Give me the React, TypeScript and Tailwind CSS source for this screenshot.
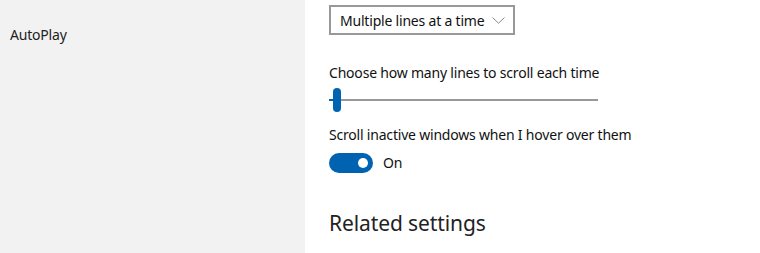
import { useState } from 'react';

const font = { fontFamily: '"Noto Sans", "Open Sans", sans-serif' };

function Dropdown() {
  return (
    <div className="flex h-[30px] w-[186px] items-center justify-between whitespace-nowrap border-2 border-[#999999] bg-white pl-[9px] pr-[8px] text-[14px] tracking-[-0.2px] text-[#111]">
      <span>Multiple lines at a time</span>
      <svg width="13" height="7" viewBox="0 0 13 7" className="mt-[1px]">
        <path d="M0.5 0.5 L6.5 6.2 L12.5 0.5" fill="none" stroke="#8a8a8a" strokeWidth="1" />
      </svg>
    </div>
  );
}

function Slider() {
  return (
    <div className="relative h-[24px] w-[269px]">
      <div className="absolute left-0 top-[11px] h-[2px] w-full bg-[#999999]" />
      <div className="absolute left-0 top-[11px] h-[2px] w-[6px] bg-[#0063b1]" />
      <div className="absolute left-[4px] top-0 h-[24px] w-[8px] rounded-full bg-[#0063b1]" />
    </div>
  );
}

function Toggle() {
  const [on, setOn] = useState(true);
  return (
    <button onClick={() => setOn(!on)} className="flex items-center gap-[10px]">
      <span className="flex h-[20px] w-[44px] items-center justify-end rounded-full bg-[#0063b1] pr-[5px]">
        <span className="h-[10px] w-[10px] rounded-full bg-white" />
      </span>
      <span className="text-[14px] tracking-[-0.2px] text-[#111]">{on ? 'On' : 'Off'}</span>
    </button>
  );
}

export default function App() {
  return (
    <div className="flex h-[253px] w-[760px] overflow-hidden bg-white" style={font}>
      <aside className="w-[305px] shrink-0 bg-[#f2f2f2] pl-[10px] pt-[24px]">
        <div className="text-[14px] tracking-[-0.2px] text-[#222]">AutoPlay</div>
      </aside>
      <main className="flex flex-col pl-[24px] pt-[5px]">
        <Dropdown />
        <div className="mt-[28px] text-[14px] leading-[20px] tracking-[-0.2px] text-[#111]">
          Choose how many lines to scroll each time
        </div>
        <div className="mt-[5px]">
          <Slider />
        </div>
        <div className="mt-[13px] text-[14px] leading-[20px] tracking-[-0.2px] text-[#111]">
          Scroll inactive windows when I hover over them
        </div>
        <div className="mt-[7px]">
          <Toggle />
        </div>
        <div className="mt-[36px] text-[21px] leading-[28px] tracking-[-0.1px] text-[#222]">Related settings</div>
      </main>
    </div>
  );
}
